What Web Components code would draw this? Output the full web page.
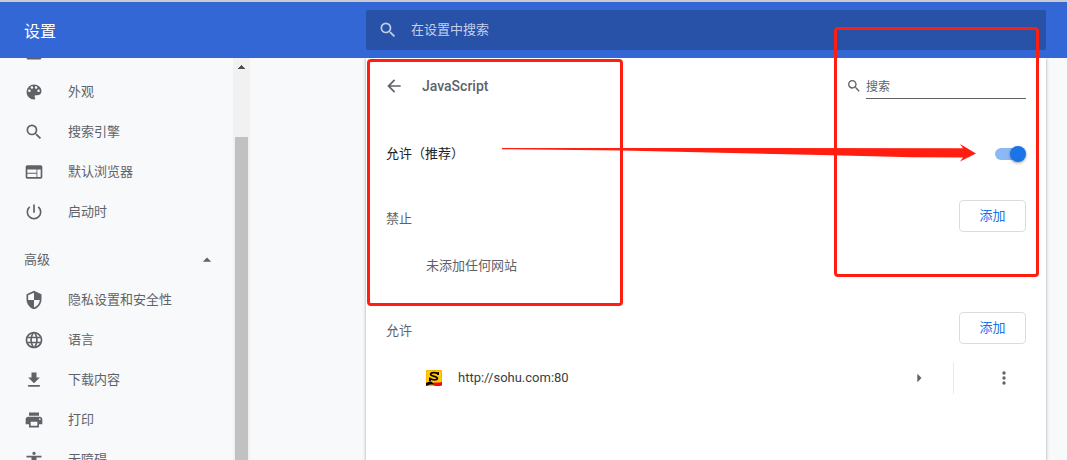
<!DOCTYPE html>
<html lang="zh-CN">
<head>
<meta charset="utf-8">
<title>设置 - JavaScript</title>
<style>
  html, body { margin: 0; height: 100%; overflow: hidden; }
  body {
    font-family: Roboto, "Noto Sans CJK SC", sans-serif;
    font-size: 13px;
    line-height: 20px;
    color: #5f6368;
    background: #f8f9fb;
  }
</style>
</head>
<body>
<settings-page></settings-page>

<script>
const ICONS = {
  search: '<path d="M15.5 14h-.79l-.28-.27A6.47 6.47 0 0 0 16 9.5 6.5 6.5 0 1 0 9.5 16c1.61 0 3.09-.59 4.23-1.57l.27.28v.79l5 4.99L20.49 19l-4.99-5zm-6 0C7.01 14 5 11.99 5 9.5S7.01 5 9.5 5 14 7.01 14 9.5 11.99 14 9.5 14z"/>',
  assignment: '<path d="M19 3h-4.18C14.4 1.84 13.3 1 12 1c-1.3 0-2.4.84-2.82 2H5c-1.1 0-2 .9-2 2v14c0 1.1.9 2 2 2h14c1.1 0 2-.9 2-2V5c0-1.1-.9-2-2-2zm-5 14H7v-2h7v2zm3-4H7v-2h10v2zm0-4H7V7h10v2z"/>',
  palette: '<path d="M12 3a9 9 0 0 0 0 18c.83 0 1.5-.67 1.5-1.5 0-.39-.15-.74-.39-1.01-.23-.26-.38-.61-.38-.99 0-.83.67-1.5 1.5-1.5H16c2.76 0 5-2.24 5-5 0-4.42-4.03-8-9-8zm-5.500 9C5.670 12 5 11.330 5 10.500S5.670 9 6.500 9 8 9.670 8 10.500 7.330 12 6.500 12zm3-4C8.670 8 8 7.330 8 6.500S8.670 5 9.500 5s1.500.67 1.500 1.500S10.330 8 9.500 8zm5 0c-.83 0-1.500-.67-1.500-1.500S13.670 5 14.500 5s1.500.67 1.500 1.500S15.330 8 14.500 8zm3 4c-.83 0-1.500-.67-1.500-1.500S16.670 9 17.500 9s1.500.67 1.500 1.500-.67 1.500-1.500 1.500z"/>',
  web: '<path d="M20 4H4c-1.1 0-1.99.9-1.99 2L2 18c0 1.1.9 2 2 2h16c1.1 0 2-.9 2-2V6c0-1.1-.9-2-2-2zm-5 14H4v-4h11v4zm0-5H4V9h11v4zm5 5h-4V9h4v9z"/>',
  power: '<path d="M13 3h-2v10h2V3zm4.83 2.17-1.42 1.42A6.92 6.92 0 0 1 19 12c0 3.87-3.13 7-7 7s-7-3.13-7-7c0-2.190 1.010-4.140 2.580-5.420L6.170 5.170A8.930 8.930 0 0 0 3 12a9 9 0 0 0 18 0c0-2.740-1.230-5.180-3.170-6.830z"/>',
  shield: '<path d="M12 1 3 5v6c0 5.550 3.840 10.740 9 12 5.160-1.260 9-6.450 9-12V5l-9-4zm0 10.990h7c-.53 4.120-3.280 7.790-7 8.940V12H5V6.300l7-3.110v8.800z"/>',
  globe: '<path d="M11.990 2C6.470 2 2 6.480 2 12s4.470 10 9.990 10C17.520 22 22 17.520 22 12S17.520 2 11.990 2zm6.930 6h-2.950a15.650 15.650 0 0 0-1.380-3.560A8.030 8.030 0 0 1 18.920 8zM12 4.040c.83 1.200 1.480 2.530 1.910 3.960h-3.820c.43-1.430 1.080-2.760 1.910-3.960zM4.260 14C4.100 13.360 4 12.690 4 12s.1-1.360.26-2h3.380c-.08.66-.14 1.320-.14 2s.06 1.340.14 2H4.260zm.82 2h2.950c.32 1.250.78 2.450 1.380 3.560A7.990 7.990 0 0 1 5.080 16zm2.950-8H5.080a7.990 7.990 0 0 1 4.330-3.560A15.650 15.650 0 0 0 8.030 8zM12 19.960c-.83-1.200-1.480-2.530-1.910-3.960h3.820c-.43 1.430-1.080 2.760-1.910 3.960zM14.340 14H9.660c-.09-.66-.16-1.320-.16-2s.07-1.350.16-2h4.680c.09.65.16 1.320.16 2s-.07 1.340-.16 2zm.25 5.560c.6-1.110 1.060-2.310 1.380-3.560h2.950a8.030 8.030 0 0 1-4.330 3.560zM16.360 14c.08-.66.14-1.320.14-2s-.06-1.340-.14-2h3.380c.16.64.26 1.310.26 2s-.1 1.360-.26 2h-3.380z"/>',
  download: '<path d="M19 9h-4V3H9v6H5l7 7 7-7zM5 18v2h14v-2H5z"/>',
  print: '<path d="M19 8H5c-1.660 0-3 1.340-3 3v6h4v4h12v-4h4v-6c0-1.660-1.340-3-3-3zm-3 11H8v-5h8v5zm3-7c-.55 0-1-.45-1-1s.45-1 1-1 1 .45 1 1-.45 1-1 1zm-1-9H6v4h12V3z"/>',
  accessibility: '<path d="M12 2c1.100 0 2 .9 2 2s-.9 2-2 2-2-.9-2-2 .9-2 2-2zm9 7h-6v13h-2v-6h-2v6H9V9H3V7h18v2z"/>',
  up: '<path d="m7 14 5-5 5 5z"/>',
  right: '<path d="m10 7 5 5-5 5z"/>',
  back: '<path d="M20 11H7.830l5.590-5.590L12 4l-8 8 8 8 1.410-1.410L7.830 13H20v-2z"/>',
  more: '<circle cx="12" cy="6" r="2"/><circle cx="12" cy="12" r="2"/><circle cx="12" cy="18" r="2"/>'
};

function define(name, html, setup) {
  const template = document.createElement('template');
  template.innerHTML = html;
  customElements.define(name, class extends HTMLElement {
    constructor() {
      super();
      this.attachShadow({ mode: 'open' }).append(template.content.cloneNode(true));
    }
    connectedCallback() {
      if (setup) setup(this, this.shadowRoot);
    }
  });
}

define('cr-icon', `
  <style>
    :host { display: block; flex: none; width: 20px; height: 20px; }
    svg { display: block; width: 100%; height: 100%; fill: currentColor; }
  </style>
  <svg viewBox="0 0 24 24" aria-hidden="true"></svg>
`, (host, root) => {
  root.querySelector('svg').innerHTML = ICONS[host.getAttribute('name')];
});

define('settings-toolbar', `
  <style>
    :host {
      display: grid;
      grid-template-columns: 366px minmax(0, 1fr);
      align-items: center;
      box-sizing: border-box;
      height: 58px;
      padding-right: 21px;
      border-top: 2px solid #c9cbd0;
      background: #3367d6;
      color: #fff;
    }
    h1 { margin: 0; padding: 4px 0 0 24px; font-size: 16px; line-height: 24px; font-weight: 400; }
    label {
      display: flex; align-items: center; gap: 13px;
      height: 40px; padding: 0 12px;
      border-radius: 2px; background: #2851a8; color: #c3cfe8;
    }
    input {
      flex: 1; min-width: 0; padding: 0; border: 0; outline: 0;
      background: none; font: inherit; color: #fff;
    }
    input::placeholder { color: #c3cfe8; opacity: 1; }
  </style>
  <h1>设置</h1>
  <label><cr-icon name="search"></cr-icon>
    <input type="search" placeholder="在设置中搜索" aria-label="在设置中搜索"></label>
`);

define('menu-item', `
  <style>
    :host { display: block; }
    a {
      display: flex; align-items: center; gap: 24px;
      height: 40px; padding-left: 24px;
      color: inherit; text-decoration: none;
    }
  </style>
  <a href="#"><span><slot></slot></span></a>
`, (host, root) => {
  const link = root.querySelector('a');
  const icon = document.createElement('cr-icon');
  icon.setAttribute('name', host.getAttribute('icon'));
  link.prepend(icon);
  if (host.hasAttribute('label')) link.setAttribute('aria-label', host.getAttribute('label'));
});

define('settings-menu', `
  <style>
    :host { display: grid; grid-template-columns: minmax(0, 1fr) 17px; overflow: hidden; }
    nav { margin-top: -26px; }
    button {
      display: flex; align-items: center; justify-content: space-between;
      box-sizing: border-box; width: 100%; height: 48px; padding: 8px 16px 0 24px;
      border: 0; background: none; font: inherit; color: inherit; text-align: left;
    }
    .track { display: flex; flex-direction: column; background: #f1f1f1; }
    .track svg { width: 17px; height: 17px; fill: #505050; }
    .thumb { flex: 1; margin: 62px 2px 0; background: #c1c1c1; }
  </style>
  <nav aria-label="设置">
    <menu-item icon="assignment" label="自动填充"></menu-item>
    <menu-item icon="palette">外观</menu-item>
    <menu-item icon="search">搜索引擎</menu-item>
    <menu-item icon="web">默认浏览器</menu-item>
    <menu-item icon="power">启动时</menu-item>
    <button type="button" aria-expanded="true"><span>高级</span><cr-icon name="up"></cr-icon></button>
    <menu-item icon="shield">隐私设置和安全性</menu-item>
    <menu-item icon="globe">语言</menu-item>
    <menu-item icon="download">下载内容</menu-item>
    <menu-item icon="print">打印</menu-item>
    <menu-item icon="accessibility">无障碍</menu-item>
  </nav>
  <div class="track">
    <svg viewBox="0 0 17 17" aria-hidden="true"><path d="M8 7h1v1h1v1h1v1h1v1H5v-1h1V9h1V8h1z"/></svg>
    <div class="thumb"></div>
  </div>
`);

define('page-header', `
  <style>
    :host { display: flex; align-items: center; height: 56px; }
    button { padding: 0; border: 0; background: none; color: inherit; margin-left: -2px; }
    h2 { flex: 1; margin: 0 0 0 18px; font-size: 14px; line-height: 20px; font-weight: 500; }
    label { display: flex; align-items: center; gap: 4px; }
    label cr-icon { width: 16px; height: 16px; }
    input {
      box-sizing: border-box; width: 160px; height: 26px; padding: 2px 0 0;
      border: 0; border-bottom: 1px solid #5f6368; border-radius: 0; outline: 0;
      background: none; font: inherit; font-size: 12px; color: inherit;
    }
    input::placeholder { color: #5f6368; opacity: 1; }
  </style>
  <button type="button" aria-label="返回"><cr-icon name="back"></cr-icon></button>
  <h2>JavaScript</h2>
  <label><cr-icon name="search"></cr-icon><input type="search" placeholder="搜索" aria-label="搜索"></label>
`);

define('toggle-row', `
  <style>
    :host { display: block; margin-top: 2px; }
    label {
      display: flex; align-items: center; justify-content: space-between;
      height: 48px; color: #202124;
    }
    input {
      appearance: none; display: grid; grid-template-columns: 31px; align-items: center;
      width: 31px; height: 16px; margin: 0;
    }
    input::before {
      content: ""; grid-area: 1 / 1; width: 28px; height: 12px;
      border-radius: 6px; background: #8cb8f4;
    }
    input::after {
      content: ""; grid-area: 1 / 1; justify-self: end; width: 16px; height: 16px;
      border-radius: 50%; background: #1a73e8; box-shadow: 0 1px 3px rgba(0, 0, 0, .4);
    }
  </style>
  <label><span><slot></slot></span><input type="checkbox" role="switch" checked></label>
`);

define('site-list', `
  <style>
    :host { display: flex; flex-direction: column; gap: 2px; }
    header { display: flex; align-items: center; justify-content: space-between; height: 48px; }
    h3 { margin: 0; padding-top: 6px; font-size: 13px; font-weight: 400; }
    button {
      box-sizing: border-box; min-width: 67px; height: 32px; padding: 0 16px 1px;
      border: 1px solid #dadce0; border-radius: 4px; background: #fff;
      font: inherit; color: #1a73e8;
    }
    .rows { display: flex; align-items: center; min-height: 48px; padding-left: 40px; }
    ::slotted(*) { flex: 1; }
  </style>
  <header><h3></h3><button type="button">添加</button></header>
  <div class="rows"><slot></slot></div>
`, (host, root) => {
  root.querySelector('h3').textContent = host.getAttribute('heading');
});

define('site-entry', `
  <style>
    :host { display: flex; align-items: center; color: #3c4043; }
    .favicon { flex: none; width: 16px; height: 16px; }
    .url { flex: 1; margin-left: 16px; }
    button {
      display: grid; place-items: center; width: 36px; height: 36px;
      padding: 0; border: 0; background: none; color: #5f6368;
    }
    .more { margin-right: 4px; }
    .rule { width: 1px; height: 32px; margin: 0 32px 0 16px; background: #e8eaed; }
  </style>
  <svg class="favicon" viewBox="0 0 16 16" aria-hidden="true">
    <rect width="16" height="16" rx="1" fill="#f7b500"/>
    <rect x="1" y="1" width="14" height="12" fill="#ffcb05"/>
    <path d="M7 13c2-1 6 0 9-1v3c-3 2-7 1-9 0z" fill="#f40a0a"/>
    <path d="M0 16v-3c2-1 4-2 6-1l2 2c-2 1-4 0-5 1z" fill="#100"/>
    <path d="M12 5V3.800C10 2.300 4.600 2 4.600 4.300c0 2.400 6.800 1.600 6.800 3.900 0 2-4.400 2-7 .6" fill="none" stroke="#100" stroke-width="1.700"/>
    <path d="M3 7.500V11h2l-.4-3.500zM11.500 2H13v3h-1.500z" fill="#100"/>
  </svg>
  <span class="url"><slot></slot></span>
  <button type="button" aria-label="详细信息"><cr-icon name="right"></cr-icon></button>
  <div class="rule"></div>
  <button class="more" type="button" aria-label="更多操作"><cr-icon name="more"></cr-icon></button>
`);

define('annotation-layer', `
  <style>
    :host { position: absolute; inset: 0; pointer-events: none; }
    .box { position: absolute; box-sizing: border-box; border: 3px solid #ff1e10; border-radius: 4px; }
    .title { left: 367px; top: 59px; width: 256px; height: 247px; }
    .switch { right: 28px; top: 27px; width: 205px; height: 250px; }
    .arrow { position: absolute; left: 502px; right: 91px; top: 144px; height: 18px; }
    .arrow svg { display: block; width: 100%; height: 100%; fill: #ff1e10; }
  </style>
  <div class="box title"></div>
  <div class="box switch"></div>
  <div class="arrow">
    <svg viewBox="0 0 474 18" preserveAspectRatio="none" aria-hidden="true">
      <path d="M0 4 120 4 461 4.300 458 0 474 9.500 458 17.500 461 13.500 410 13.300 330 11.300 120 6.500 0 5.200z"/>
    </svg>
  </div>
`);

define('settings-page', `
  <style>
    :host { display: flex; flex-direction: column; position: relative; height: 100vh; overflow: hidden; }
    .body { flex: 1; min-height: 0; display: grid; grid-template-columns: 250px minmax(0, 1fr); grid-template-rows: minmax(0, 1fr); }
    main { padding: 0 21px 0 116px; overflow: hidden; }
    .card {
      display: flex; flex-direction: column; gap: 14px;
      box-sizing: border-box; min-height: 100%; padding: 0 20px;
      background: #fff;
      box-shadow: 0 1px 2px rgba(60, 64, 67, .3), 0 1px 3px 1px rgba(60, 64, 67, .15);
    }
  </style>
  <settings-toolbar></settings-toolbar>
  <div class="body">
    <settings-menu></settings-menu>
    <main>
      <div class="card">
        <page-header></page-header>
        <toggle-row>允许（推荐）</toggle-row>
        <site-list heading="禁止"><span>未添加任何网站</span></site-list>
        <site-list heading="允许"><site-entry>http://sohu.com:80</site-entry></site-list>
      </div>
    </main>
  </div>
  <annotation-layer></annotation-layer>
`);
</script>
</body>
</html>
